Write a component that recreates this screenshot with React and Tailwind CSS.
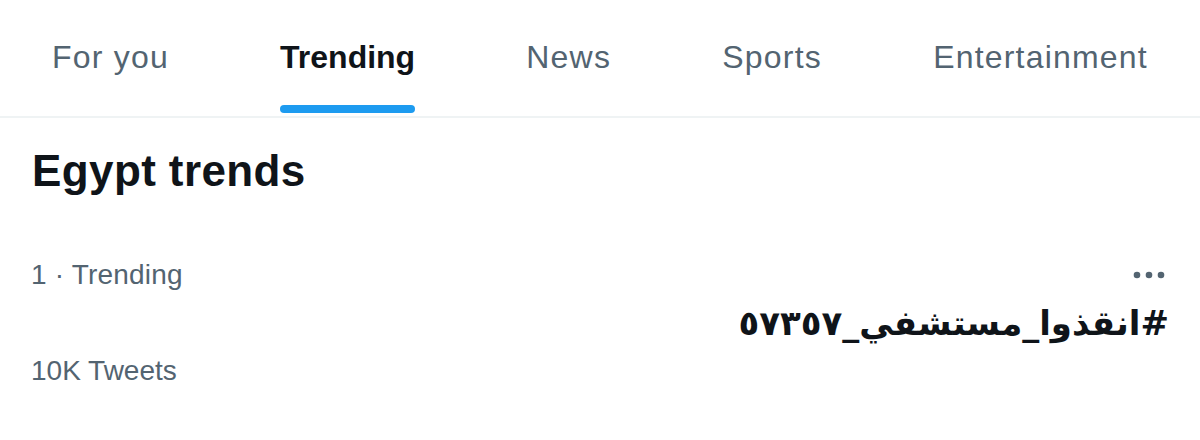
import { useState } from 'react';

const tabs = ['For you', 'Trending', 'News', 'Sports', 'Entertainment'];

function TabBar() {
  const [active, setActive] = useState('Trending');

  return (
    <div className="flex justify-between px-[52px] border-b-2 border-[#eff3f4]">
      {tabs.map((tab) => {
        const isActive = tab === active;
        return (
          <button
            key={tab}
            onClick={() => setActive(tab)}
            className="flex flex-col items-stretch pt-[38px] pb-[3px] cursor-pointer"
          >
            <span
              className={
                isActive
                  ? 'text-[32px] leading-[38px] font-bold text-[#0f1419] whitespace-nowrap'
                  : 'text-[32px] leading-[38px] tracking-[1.2px] text-[#536471] whitespace-nowrap'
              }
            >
              {tab}
            </span>
            <span
              className={
                isActive
                  ? 'mt-[29px] h-2 rounded-full bg-[#1d9bf0]'
                  : 'mt-[29px] h-2 rounded-full bg-transparent'
              }
            />
          </button>
        );
      })}
    </div>
  );
}

function MoreIcon() {
  return (
    <svg width="34" height="10" viewBox="0 0 34 10" className="fill-[#536471]">
      <circle cx="5" cy="5" r="3.3" />
      <circle cx="17" cy="5" r="3.3" />
      <circle cx="29" cy="5" r="3.3" />
    </svg>
  );
}

function TrendItem({ rank, category, hashtag, count }) {
  return (
    <div className="relative px-[31px]">
      <div className="flex items-center justify-between h-12">
        <span className="text-[28px] tracking-[0.2px] text-[#536471]">
          {rank} · {category}
        </span>
        <span className="mr-[3px] flex items-center">
          <MoreIcon />
        </span>
      </div>
      <div
        dir="auto"
        className="h-12 flex items-center text-[34px] font-bold text-[#0f1419] font-['DejaVu_Sans',sans-serif]"
      >
        <span dir="rtl" className="w-full text-right">{hashtag}</span>
      </div>
      <div className="h-12 flex items-center text-[28px] text-[#536471]">{count}</div>
    </div>
  );
}

export default function App() {
  return (
    <div className="w-[1200px] h-[440px] bg-white overflow-hidden font-['Liberation_Sans',Arial,sans-serif]">
      <TabBar />

      {/* Section header */}
      <div className="px-8 pt-[25px] pb-[52px]">
        <h2 className="text-[44px] leading-[56px] font-bold tracking-[0.4px] text-[#0f1419]">Egypt trends</h2>
      </div>

      <TrendItem
        rank="1"
        category="Trending"
        hashtag="#انقذوا_مستشفي_٥٧٣٥٧"
        count="10K Tweets"
      />
    </div>
  );
}
